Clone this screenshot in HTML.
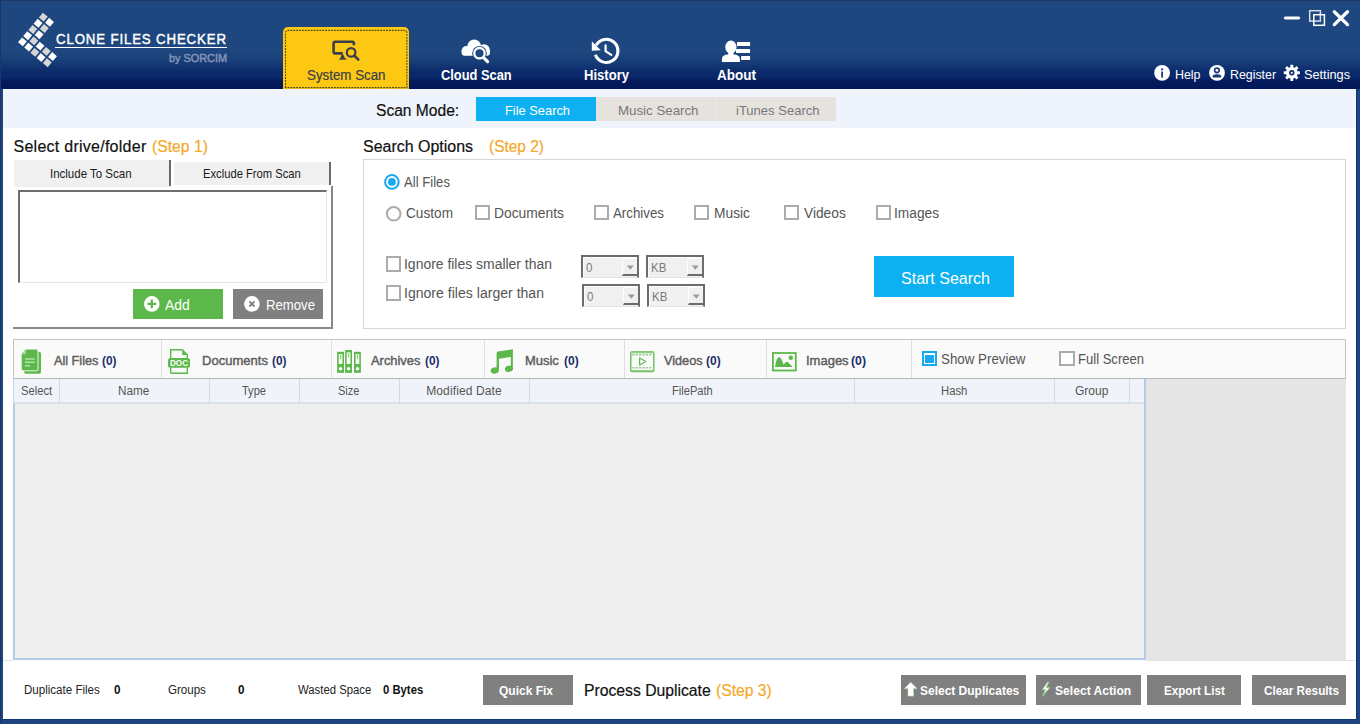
<!DOCTYPE html>
<html><head><meta charset="utf-8"><title>Clone Files Checker</title>
<style>
html,body{margin:0;padding:0;width:1360px;height:724px;overflow:hidden;background:#1d447e;}
body{position:relative;font-family:"Liberation Sans",sans-serif;}
.r{position:absolute;box-sizing:border-box;}
svg.r{overflow:visible;}
.t{position:absolute;line-height:1;white-space:nowrap;font-family:"Liberation Sans",sans-serif;}
</style></head><body>
<div class="r" style="left:0px;top:0px;width:1360px;height:724px;background:#1d447e;"></div>
<div class="r" style="left:0px;top:0px;width:1360px;height:89px;background:linear-gradient(to bottom,#1f477f 0px,#1f477f 52px,#173d77 62px,#0b2a6b 72px,#0a286a 77px,#04195a 82px,#03185a 89px);"></div>
<div class="r" style="left:0px;top:0px;width:1360px;height:1px;background:#1b3764;"></div>
<div class="r" style="left:0px;top:0px;width:1px;height:724px;background:#1b3764;"></div>
<div class="r" style="left:3px;top:89px;width:1353px;height:630px;background:#ffffff;"></div>
<div class="r" style="left:3px;top:89px;width:1353px;height:39px;background:#eff3fc;"></div>
<div class="r" style="left:3px;top:719px;width:1353px;height:1px;background:#0e387a;"></div>
<div class="r" style="left:1356px;top:89px;width:1px;height:630px;background:#0e387a;"></div>
<svg class="r" style="left:0;top:0" width="80" height="80"><g transform="translate(22.46,41.9) rotate(-50)"><rect x="-3.15" y="-3.15" width="6.3" height="6.3" fill="#ffffff"/><rect x="4.95" y="-3.15" width="6.3" height="6.3" fill="#ffffff"/><rect x="13.05" y="-3.15" width="6.3" height="6.3" fill="#d6d6d6"/><rect x="21.15" y="-3.15" width="6.3" height="6.3" fill="#ffffff"/><rect x="29.25" y="-3.15" width="6.3" height="6.3" fill="#d6d6d6"/><rect x="4.95" y="4.95" width="6.3" height="6.3" fill="#d6d6d6"/><rect x="13.05" y="4.95" width="6.3" height="6.3" fill="#ffffff"/><rect x="21.15" y="4.95" width="6.3" height="6.3" fill="#d6d6d6"/><rect x="29.25" y="4.95" width="6.3" height="6.3" fill="#ffffff"/><rect x="-3.15" y="4.95" width="6.3" height="6.3" fill="#ffffff"/><rect x="-3.15" y="13.05" width="6.3" height="6.3" fill="#d6d6d6"/><rect x="-3.15" y="21.15" width="6.3" height="6.3" fill="#ffffff"/><rect x="-3.15" y="29.25" width="6.3" height="6.3" fill="#d6d6d6"/><rect x="4.95" y="13.05" width="6.3" height="6.3" fill="#ffffff"/><rect x="4.95" y="21.15" width="6.3" height="6.3" fill="#d6d6d6"/><rect x="4.95" y="29.25" width="6.3" height="6.3" fill="#ffffff"/></g></svg>
<div class="t" style="left:56px;top:31px;font-size:15.5px;color:#fff;letter-spacing:1.0px;transform:scaleX(0.8548);transform-origin:0 0;-webkit-text-stroke:0.45px #fff;">CLONE FILES CHECKER</div>
<div class="r" style="left:55px;top:46.5px;width:172px;height:1.4px;background:#fff;"></div>
<div class="t" style="left:168.50px;top:53px;font-size:11.5px;color:#8797bb;-webkit-text-stroke:0.45px #8797bb;transform:scaleX(0.9455);transform-origin:0 0;">by SORCIM</div>
<div class="r" style="left:283px;top:27px;width:126px;height:62px;background:#fcc814;border-radius:5px 5px 0 0;"></div>
<svg class="r" style="left:283px;top:27px" width="126" height="62"><path d="M2.5 60.6 V6.3 Q2.5 3.4 5.4 3.4 H121 Q123.9 3.4 123.9 6.3 V60.6 Z" fill="none" stroke="#4f4420" stroke-width="1.1" stroke-dasharray="1.8 1.1"/></svg>
<svg class="r" style="left:325px;top:35px" width="40" height="30" viewBox="0 0 40 30">
<path d="M17.8 18.4 H10.2 Q8.6 18.4 8.6 16.8 V8.4 Q8.6 6.8 10.2 6.8 H27.3 Q28.9 6.8 28.9 8.4 V10.2" fill="none" stroke="#3b3d48" stroke-width="2.6"/>
<path d="M16.6 19.4 L18.3 19.4 Q19 23 22.2 24.6 L14 24.8 Q16.2 22.6 16.6 19.4 Z" fill="#3b3d48"/>
<circle cx="26.1" cy="17.4" r="4.3" fill="none" stroke="#3b3d48" stroke-width="2.2"/>
<path d="M29.2 20.5 L33.3 24.6" stroke="#3b3d48" stroke-width="2.6" stroke-linecap="round"/>
</svg>
<div class="t" style="left:306.75px;top:68px;font-size:14px;color:#3b3d48;-webkit-text-stroke:0.2px #3b3d48;transform:scaleX(0.9518);transform-origin:0 0;">System Scan</div>
<svg class="r" style="left:455px;top:35px" width="45" height="30" viewBox="0 0 45 30">
<circle cx="11.3" cy="15.8" r="4.7" fill="#fff"/>
<circle cx="19.2" cy="11.2" r="6.8" fill="#fff"/>
<circle cx="29" cy="15.2" r="5.9" fill="#fff"/>
<rect x="6.6" y="14" width="28.3" height="6.7" rx="3" fill="#fff"/>
<circle cx="24.5" cy="18.2" r="7.3" fill="#1f477f"/>
<path d="M28.5 22.5 L32.6 26.6" stroke="#1f477f" stroke-width="5.5" stroke-linecap="round"/>
<circle cx="24.5" cy="18.2" r="5.2" fill="none" stroke="#fff" stroke-width="2.3"/>
<path d="M28.6 22.6 L32.6 26.6" stroke="#fff" stroke-width="3" stroke-linecap="round"/>
</svg>
<div class="t" style="left:440.65px;top:68px;font-size:14px;color:#fff;font-weight:bold;transform:scaleX(0.9181);transform-origin:0 0;">Cloud Scan</div>
<svg class="r" style="left:585px;top:33px" width="45" height="32" viewBox="0 0 45 32">
<path d="M10.4 21.8 A11.6 11.6 0 1 0 11.2 12.2" fill="none" stroke="#fff" stroke-width="3.1"/>
<path d="M6.8 8.3 L6.8 17.7 L15.8 17.3 Z" fill="#fff"/>
<path d="M20.6 12.3 V18.2 L26.3 21.9" fill="none" stroke="#fff" stroke-width="2.2" stroke-linecap="round" stroke-linejoin="miter"/>
</svg>
<div class="t" style="left:583.50px;top:68px;font-size:14px;color:#fff;font-weight:bold;transform:scaleX(0.9329);transform-origin:0 0;">History</div>
<svg class="r" style="left:715px;top:33px" width="45" height="32" viewBox="0 0 45 32">
<ellipse cx="15.9" cy="14.2" rx="5.6" ry="6.6" fill="#fff"/>
<path d="M13.5 19 H18.3 L18.6 21.5 Q24.5 21.8 24.9 25.5 V29.1 H6.9 V25.5 Q7.3 21.8 13.2 21.5 Z" fill="#fff"/>
<rect x="22" y="9.1" width="13.1" height="3.9" fill="#fff" rx="0.6"/>
<rect x="21" y="16.1" width="14.1" height="3.8" fill="#fff" rx="0.6"/>
<rect x="26.1" y="23" width="9" height="4" fill="#fff" rx="0.6"/>
</svg>
<div class="t" style="left:716.50px;top:68px;font-size:14px;color:#fff;font-weight:bold;transform:scaleX(0.9647);transform-origin:0 0;">About</div>
<svg class="r" style="left:1280px;top:0px" width="80" height="32" viewBox="0 0 80 32">
<path d="M5.4 18 H18.6" stroke="#fff" stroke-width="3.2" stroke-linecap="round"/>
<rect x="29.7" y="10.7" width="10.7" height="10.4" fill="none" stroke="#d5dbe6" stroke-width="1.5"/>
<rect x="33.8" y="14.7" width="10.6" height="10.6" fill="none" stroke="#fff" stroke-width="1.5"/>
<path d="M54.3 11.8 L67.5 24.6 M67.5 11.8 L54.3 24.6" stroke="#fff" stroke-width="3.3" stroke-linecap="round"/>
</svg>
<svg class="r" style="left:1150px;top:62px" width="160" height="24" viewBox="0 0 160 24">
<circle cx="12.1" cy="10.9" r="7.9" fill="#fff"/>
<circle cx="12.1" cy="7.4" r="1.1" fill="#1b3d78"/>
<rect x="11.2" y="9.6" width="1.8" height="6" fill="#1b3d78"/>
<circle cx="67" cy="10.9" r="7.9" fill="#fff"/>
<circle cx="66.9" cy="8.3" r="3.1" fill="#17387a"/>
<circle cx="66.9" cy="8.3" r="1.4" fill="#fff"/>
<path d="M62.5 14.6 Q62.7 12.3 66.9 12.3 Q71.1 12.3 71.3 14.6 Q71.3 15.5 70.2 15.5 H63.6 Q62.5 15.5 62.5 14.6 Z" fill="#17387a"/>
<g transform="translate(141.8,10.8)" fill="#fff"><circle r="5.9"/><rect x="-1.45" y="-8.1" width="2.9" height="16.2" rx="0.4" transform="rotate(0)"/><rect x="-1.45" y="-8.1" width="2.9" height="16.2" rx="0.4" transform="rotate(45)"/><rect x="-1.45" y="-8.1" width="2.9" height="16.2" rx="0.4" transform="rotate(90)"/><rect x="-1.45" y="-8.1" width="2.9" height="16.2" rx="0.4" transform="rotate(135)"/><circle r="2.7" fill="#0d2c6c"/><circle r="1.1" fill="#fff"/></g>
</svg>
<div class="t" style="left:1175.00px;top:68px;font-size:13px;color:#fff;transform:scaleX(0.9538);transform-origin:0 0;">Help</div>
<div class="t" style="left:1229.50px;top:68px;font-size:13px;color:#fff;transform:scaleX(0.9503);transform-origin:0 0;">Register</div>
<div class="t" style="left:1304.00px;top:68px;font-size:13px;color:#fff;transform:scaleX(0.9793);transform-origin:0 0;">Settings</div>
<div class="t" style="left:376.40px;top:103px;font-size:16px;color:#111;-webkit-text-stroke:0.2px #111;transform:scaleX(0.9744);transform-origin:0 0;">Scan Mode:</div>
<div class="r" style="left:476px;top:97px;width:120px;height:24px;background:#0eb0f2;"></div>
<div class="t" style="left:505.30px;top:104px;font-size:13.5px;color:#fff;transform:scaleX(0.9520);transform-origin:0 0;">File Search</div>
<div class="r" style="left:596px;top:97px;width:119px;height:24px;background:#e6e3df;"></div>
<div class="r" style="left:715px;top:97px;width:121px;height:24px;background:#e6e3df;"></div>
<div class="r" style="left:714.5px;top:97px;width:1px;height:24px;background:#ecebe8;"></div>
<div class="t" style="left:617.65px;top:104px;font-size:13.5px;color:#777;transform:scaleX(0.9844);transform-origin:0 0;">Music Search</div>
<div class="t" style="left:735.70px;top:104px;font-size:13.5px;color:#777;transform:scaleX(0.9650);transform-origin:0 0;">iTunes Search</div>
<div class="t" style="left:13.50px;top:139px;font-size:16px;color:#111;-webkit-text-stroke:0.2px #111;letter-spacing:0.260px;">Select drive/folder</div>
<div class="t" style="left:152.20px;top:139px;font-size:16px;color:#f6a82a;-webkit-text-stroke:0.2px #f6a82a;transform:scaleX(0.9839);transform-origin:0 0;">(Step 1)</div>
<div class="r" style="left:14px;top:160px;width:157px;height:26.5px;background:#f0f0f0;border-radius:2px 0 0 0;"></div>
<div class="r" style="left:169.2px;top:160px;width:2px;height:26px;background:#6a6a6a;"></div>
<div class="t" style="left:50.30px;top:167px;font-size:13px;color:#1a1a1a;transform:scaleX(0.8835);transform-origin:0 0;">Include To Scan</div>
<div class="r" style="left:174px;top:162px;width:157px;height:22.5px;background:#f0f0f0;border-radius:2px 0 0 0;"></div>
<div class="r" style="left:329.2px;top:162px;width:2px;height:22.5px;background:#6a6a6a;"></div>
<div class="t" style="left:203.40px;top:167px;font-size:13px;color:#1a1a1a;transform:scaleX(0.8622);transform-origin:0 0;">Exclude From Scan</div>
<div class="r" style="left:331px;top:185.5px;width:2px;height:143.3px;background:#888;"></div>
<div class="r" style="left:13px;top:327px;width:320px;height:2px;background:#888;"></div>
<div class="r" style="left:18.3px;top:190.2px;width:309px;height:93px;background:#fff;border-top:2px solid #6e6e6e;border-left:2px solid #6e6e6e;border-right:1px solid #e3e3e3;border-bottom:1px solid #e3e3e3;box-sizing:border-box;"></div>
<div class="r" style="left:133px;top:289px;width:90px;height:29.6px;background:#5cb84a;"></div>
<svg class="r" style="left:143px;top:295px" width="18" height="18" viewBox="0 0 18 18"><circle cx="8.8" cy="8.9" r="7.8" fill="#fff"/><path d="M8.8 4.5 V13.3 M4.4 8.9 H13.2" stroke="#5cb84a" stroke-width="2.2"/></svg>
<div class="t" style="left:165.40px;top:298px;font-size:14.5px;color:#fff;transform:scaleX(0.9574);transform-origin:0 0;">Add</div>
<div class="r" style="left:233px;top:289px;width:90px;height:29.6px;background:#808080;"></div>
<svg class="r" style="left:243px;top:295px" width="18" height="18" viewBox="0 0 18 18"><circle cx="8.9" cy="8.9" r="7.8" fill="#fff"/><path d="M6.3 6.3 L11.5 11.5 M11.5 6.3 L6.3 11.5" stroke="#808080" stroke-width="1.8"/></svg>
<div class="t" style="left:265.60px;top:298px;font-size:14.5px;color:#fff;transform:scaleX(0.9075);transform-origin:0 0;">Remove</div>
<div class="t" style="left:363.30px;top:139px;font-size:16px;color:#111;-webkit-text-stroke:0.2px #111;transform:scaleX(0.9974);transform-origin:0 0;">Search Options</div>
<div class="t" style="left:488.90px;top:139px;font-size:16px;color:#f6a82a;-webkit-text-stroke:0.2px #f6a82a;transform:scaleX(0.9664);transform-origin:0 0;">(Step 2)</div>
<div class="r" style="left:363px;top:159px;width:983px;height:170px;border:1px solid #d6d6d6;box-sizing:border-box;"></div>
<svg class="r" style="left:380px;top:170px" width="30" height="60" viewBox="0 0 30 60">
<circle cx="11.9" cy="11.9" r="6.8" fill="#fff" stroke="#1aa9ef" stroke-width="2"/>
<circle cx="11.9" cy="11.9" r="3.9" fill="#1aa9ef"/>
<circle cx="13.7" cy="43.8" r="6.8" fill="#fff" stroke="#ababab" stroke-width="2"/>
</svg>
<div class="t" style="left:404.00px;top:175px;font-size:14px;color:#555;transform:scaleX(0.9386);transform-origin:0 0;">All Files</div>
<div class="t" style="left:405.60px;top:206px;font-size:14px;color:#555;transform:scaleX(0.9744);transform-origin:0 0;">Custom</div>
<div class="r" style="left:474.5px;top:205.2px;width:15.2px;height:15.2px;border:2px solid #ababab;box-sizing:border-box;background:#fff;"></div>
<div class="t" style="left:493.60px;top:206px;font-size:14px;color:#555;transform:scaleX(0.9886);transform-origin:0 0;">Documents</div>
<div class="r" style="left:593.5px;top:205.2px;width:15.2px;height:15.2px;border:2px solid #ababab;box-sizing:border-box;background:#fff;"></div>
<div class="t" style="left:613.00px;top:206px;font-size:14px;color:#555;transform:scaleX(0.9500);transform-origin:0 0;">Archives</div>
<div class="r" style="left:694.3px;top:205.2px;width:15.2px;height:15.2px;border:2px solid #ababab;box-sizing:border-box;background:#fff;"></div>
<div class="t" style="left:713.60px;top:206px;font-size:14px;color:#555;transform:scaleX(0.9847);transform-origin:0 0;">Music</div>
<div class="r" style="left:784.3px;top:205.2px;width:15.2px;height:15.2px;border:2px solid #ababab;box-sizing:border-box;background:#fff;"></div>
<div class="t" style="left:803.50px;top:206px;font-size:14px;color:#555;transform:scaleX(0.9812);transform-origin:0 0;">Videos</div>
<div class="r" style="left:875.5px;top:205.2px;width:15.2px;height:15.2px;border:2px solid #ababab;box-sizing:border-box;background:#fff;"></div>
<div class="t" style="left:893.80px;top:206px;font-size:14px;color:#555;transform:scaleX(0.9802);transform-origin:0 0;">Images</div>
<div class="r" style="left:385.6px;top:256.4px;width:15.2px;height:15.2px;border:2px solid #ababab;box-sizing:border-box;"></div>
<div class="t" style="left:404.00px;top:257px;font-size:14px;color:#555;transform:scaleX(0.9958);transform-origin:0 0;">Ignore files smaller than</div>
<div class="r" style="left:385.6px;top:285.4px;width:15.2px;height:15.2px;border:2px solid #ababab;box-sizing:border-box;"></div>
<div class="t" style="left:404.00px;top:286px;font-size:14px;color:#555;letter-spacing:0.029px;">Ignore files larger than</div>
<div class="r" style="left:581.2px;top:255.1px;width:58px;height:22.5px;background:#f0f0f0;border-top:2px solid #6c6c6c;border-left:2px solid #6c6c6c;border-right:2px solid #6c6c6c;border-bottom:1px solid #e4e4e4;box-sizing:border-box;"></div>
<div class="r" style="left:583.2px;top:257.1px;width:54px;height:1px;background:#fdfdfd;"></div>
<div class="r" style="left:583.2px;top:257.1px;width:1px;height:19.5px;background:#fdfdfd;"></div>
<div class="r" style="left:622.2px;top:257.6px;width:15px;height:18.2px;background:#f0f0f0;border-left:1px solid #fdfdfd;border-top:1px solid #fdfdfd;border-bottom:2px solid #6c6c6c;box-sizing:border-box;"></div>
<svg class="r" style="left:626.2px;top:264.6px" width="9" height="6"><path d="M0.8 0.5 H7.8 L4.3 4.8 Z" fill="#9a9a9a"/></svg>
<div class="t" style="left:585.70px;top:262px;font-size:12.5px;color:#7a7a7a;transform:scaleX(0.9200);transform-origin:0 0;">0</div>
<div class="r" style="left:646.2px;top:255.1px;width:58px;height:22.5px;background:#f0f0f0;border-top:2px solid #6c6c6c;border-left:2px solid #6c6c6c;border-right:2px solid #6c6c6c;border-bottom:1px solid #e4e4e4;box-sizing:border-box;"></div>
<div class="r" style="left:648.2px;top:257.1px;width:54px;height:1px;background:#fdfdfd;"></div>
<div class="r" style="left:648.2px;top:257.1px;width:1px;height:19.5px;background:#fdfdfd;"></div>
<div class="r" style="left:687.2px;top:257.6px;width:15px;height:18.2px;background:#f0f0f0;border-left:1px solid #fdfdfd;border-top:1px solid #fdfdfd;border-bottom:2px solid #6c6c6c;box-sizing:border-box;"></div>
<svg class="r" style="left:691.2px;top:264.6px" width="9" height="6"><path d="M0.8 0.5 H7.8 L4.3 4.8 Z" fill="#9a9a9a"/></svg>
<div class="t" style="left:650.70px;top:262px;font-size:12.5px;color:#7a7a7a;transform:scaleX(0.9200);transform-origin:0 0;">KB</div>
<div class="r" style="left:582px;top:284.4px;width:58px;height:22.5px;background:#f0f0f0;border-top:2px solid #6c6c6c;border-left:2px solid #6c6c6c;border-right:2px solid #6c6c6c;border-bottom:1px solid #e4e4e4;box-sizing:border-box;"></div>
<div class="r" style="left:584px;top:286.4px;width:54px;height:1px;background:#fdfdfd;"></div>
<div class="r" style="left:584px;top:286.4px;width:1px;height:19.5px;background:#fdfdfd;"></div>
<div class="r" style="left:623px;top:286.9px;width:15px;height:18.2px;background:#f0f0f0;border-left:1px solid #fdfdfd;border-top:1px solid #fdfdfd;border-bottom:2px solid #6c6c6c;box-sizing:border-box;"></div>
<svg class="r" style="left:627px;top:293.9px" width="9" height="6"><path d="M0.8 0.5 H7.8 L4.3 4.8 Z" fill="#9a9a9a"/></svg>
<div class="t" style="left:586.50px;top:291px;font-size:12.5px;color:#7a7a7a;transform:scaleX(0.9200);transform-origin:0 0;">0</div>
<div class="r" style="left:647px;top:284.4px;width:58px;height:22.5px;background:#f0f0f0;border-top:2px solid #6c6c6c;border-left:2px solid #6c6c6c;border-right:2px solid #6c6c6c;border-bottom:1px solid #e4e4e4;box-sizing:border-box;"></div>
<div class="r" style="left:649px;top:286.4px;width:54px;height:1px;background:#fdfdfd;"></div>
<div class="r" style="left:649px;top:286.4px;width:1px;height:19.5px;background:#fdfdfd;"></div>
<div class="r" style="left:688px;top:286.9px;width:15px;height:18.2px;background:#f0f0f0;border-left:1px solid #fdfdfd;border-top:1px solid #fdfdfd;border-bottom:2px solid #6c6c6c;box-sizing:border-box;"></div>
<svg class="r" style="left:692px;top:293.9px" width="9" height="6"><path d="M0.8 0.5 H7.8 L4.3 4.8 Z" fill="#9a9a9a"/></svg>
<div class="t" style="left:651.50px;top:291px;font-size:12.5px;color:#7a7a7a;transform:scaleX(0.9200);transform-origin:0 0;">KB</div>
<div class="r" style="left:874px;top:256.3px;width:140px;height:40.3px;background:#0db1f2;"></div>
<div class="t" style="left:900.50px;top:270px;font-size:17px;color:#fff;transform:scaleX(0.9419);transform-origin:0 0;">Start Search</div>
<div class="r" style="left:13px;top:339px;width:1333px;height:40px;background:#fafafa;border:1px solid #c4c4c4;border-top:1.5px solid #c4c4c4;box-sizing:border-box;"></div>
<div class="r" style="left:13px;top:378px;width:1333px;height:1px;background:#b5b9bd;"></div>
<div class="r" style="left:161px;top:340px;width:1px;height:38px;background:#dedede;"></div>
<div class="r" style="left:331px;top:340px;width:1px;height:38px;background:#dedede;"></div>
<div class="r" style="left:484px;top:340px;width:1px;height:38px;background:#dedede;"></div>
<div class="r" style="left:624px;top:340px;width:1px;height:38px;background:#dedede;"></div>
<div class="r" style="left:766px;top:340px;width:1px;height:38px;background:#dedede;"></div>
<div class="r" style="left:911px;top:340px;width:1px;height:38px;background:#dedede;"></div>
<svg class="r" style="left:15px;top:345px" width="30" height="32" viewBox="0 0 30 32">
<path d="M9.1 6.8 H24.1 Q26 6.8 26 8.7 V26.8 Q26 28.7 24.1 28.7 H11 Q9.1 28.7 9.1 26.8 Z" fill="#5cb84a"/>
<path d="M6.2 8.9 L10.9 4.1 H21.2 Q23 4.1 23 5.9 V24 Q23 25.8 21.2 25.8 H8 Q6.2 25.8 6.2 24 Z" fill="#5cb84a" stroke="#fafafa" stroke-width="0.9"/>
<path d="M6.2 9.2 H10.8 V4.1 Z" fill="#a9d89f"/>
<path d="M10 14.1 H19.8 M10 17.3 H19.8 M10 20.7 H15.1" stroke="#b5e0ad" stroke-width="1.5"/>
</svg>
<div class="t" style="left:53.50px;top:354px;font-size:13.5px;color:#5e5e5e;-webkit-text-stroke:0.45px #5e5e5e;transform:scaleX(0.9396);transform-origin:0 0;">All Files</div>
<div class="t" style="left:101.50px;top:354px;font-size:13px;color:#1e2f6b;font-weight:bold;transform:scaleX(0.9126);transform-origin:0 0;">(0)</div>
<svg class="r" style="left:163px;top:345px" width="30" height="32" viewBox="0 0 30 32">
<path d="M7.7 28.2 V22.8 M24.3 22.8 V28.2 H7.7 M7.7 13 V4.7 H19.2 L24.3 9.8 V13" fill="none" stroke="#5cb84a" stroke-width="1.4"/>
<path d="M19.2 4.7 V10 H24.3 Z" fill="#5cb84a"/>
<rect x="5" y="13" width="22" height="9.8" rx="2.6" fill="#5cb84a"/>
<text x="16" y="21.2" font-family="Liberation Sans" font-weight="bold" font-size="8.4" fill="#fff" text-anchor="middle" textLength="18" lengthAdjust="spacingAndGlyphs">DOC</text>
</svg>
<div class="t" style="left:201.90px;top:354px;font-size:13.5px;color:#5e5e5e;-webkit-text-stroke:0.45px #5e5e5e;transform:scaleX(0.9666);transform-origin:0 0;">Documents</div>
<div class="t" style="left:271.80px;top:354px;font-size:13px;color:#1e2f6b;font-weight:bold;transform:scaleX(0.9126);transform-origin:0 0;">(0)</div>
<svg class="r" style="left:333px;top:345px" width="32" height="32" viewBox="0 0 32 32"><rect x="4.10" y="6.80" width="6.9" height="21.00" fill="#5cb84a"/><rect x="5.70" y="9.20" width="3.7" height="9.70" fill="#fff"/><rect x="6.90" y="10.00" width="1.3" height="4.2" fill="#8fcf84"/><circle cx="7.55" cy="368.8" r="1.8" fill="#fff" transform="translate(0,-345)"/><rect x="12.10" y="5.00" width="6.9" height="22.80" fill="#5cb84a"/><rect x="13.70" y="7.40" width="3.7" height="11.50" fill="#fff"/><rect x="14.90" y="8.20" width="1.3" height="4.2" fill="#8fcf84"/><circle cx="15.55" cy="368.8" r="1.8" fill="#fff" transform="translate(0,-345)"/><rect x="21.00" y="6.80" width="6.9" height="21.00" fill="#5cb84a"/><rect x="22.60" y="9.20" width="3.7" height="9.70" fill="#fff"/><rect x="23.80" y="10.00" width="1.3" height="4.2" fill="#8fcf84"/><circle cx="24.45" cy="368.8" r="1.8" fill="#fff" transform="translate(0,-345)"/></svg>
<div class="t" style="left:371.30px;top:354px;font-size:13.5px;color:#5e5e5e;-webkit-text-stroke:0.45px #5e5e5e;transform:scaleX(0.9543);transform-origin:0 0;">Archives</div>
<div class="t" style="left:424.70px;top:354px;font-size:13px;color:#1e2f6b;font-weight:bold;transform:scaleX(0.9126);transform-origin:0 0;">(0)</div>
<svg class="r" style="left:486px;top:345px" width="32" height="32" viewBox="0 0 32 32">
<path d="M10.6 25.5 V8.2 Q10.6 6.8 12 6.6 L26.9 4.3 V22.5 H24.8 V11.9 L13 13.8 V25.5 Z" fill="#5cb84a"/>
<ellipse cx="8.7" cy="25.5" rx="4.1" ry="3" fill="#5cb84a" transform="rotate(-12 8.7 25.5)"/>
<ellipse cx="23" cy="23.8" rx="4.1" ry="3" fill="#5cb84a" transform="rotate(-12 23 23.8)"/>
</svg>
<div class="t" style="left:524.70px;top:354px;font-size:13.5px;color:#5e5e5e;-webkit-text-stroke:0.45px #5e5e5e;transform:scaleX(0.9588);transform-origin:0 0;">Music</div>
<div class="t" style="left:564.40px;top:354px;font-size:13px;color:#1e2f6b;font-weight:bold;transform:scaleX(0.9252);transform-origin:0 0;">(0)</div>
<svg class="r" style="left:626px;top:345px" width="32" height="32" viewBox="0 0 32 32">
<rect x="4.8" y="6.9" width="23" height="19.6" rx="1" fill="none" stroke="#5cb84a" stroke-width="1.3"/>
<path d="M4.8 7.6 H27.8" stroke="#8fcf84" stroke-width="1.4"/>
<path d="M4.8 25.8 H27.8" stroke="#8fcf84" stroke-width="1.4"/>
<path d="M6.2 9.8 H26.6 M6.2 22.8 H26.6" stroke="#8fcf84" stroke-width="1.5" stroke-dasharray="2.2 1.2"/>
<path d="M13.6 12.9 V19.9 L19.9 16.4 Z" fill="none" stroke="#5cb84a" stroke-width="1.2" stroke-linejoin="round"/>
</svg>
<div class="t" style="left:664.40px;top:354px;font-size:13.5px;color:#5e5e5e;-webkit-text-stroke:0.45px #5e5e5e;transform:scaleX(0.9400);transform-origin:0 0;">Videos</div>
<div class="t" style="left:706.20px;top:354px;font-size:13px;color:#1e2f6b;font-weight:bold;transform:scaleX(0.9252);transform-origin:0 0;">(0)</div>
<svg class="r" style="left:768px;top:345px" width="32" height="32" viewBox="0 0 32 32">
<rect x="4.9" y="8" width="22.9" height="17.5" fill="none" stroke="#5cb84a" stroke-width="1.8"/>
<path d="M7 22 Q8.5 12 10.9 12 Q13 12 15.6 19.4 Q17 17.8 19.2 16.6 L24.8 22 Z" fill="#5cb84a"/>
<circle cx="22.8" cy="12.8" r="2.2" fill="#5cb84a"/>
</svg>
<div class="t" style="left:805.60px;top:354px;font-size:13.5px;color:#5e5e5e;-webkit-text-stroke:0.45px #5e5e5e;transform:scaleX(0.9623);transform-origin:0 0;">Images</div>
<div class="t" style="left:851.20px;top:354px;font-size:13px;color:#1e2f6b;font-weight:bold;transform:scaleX(0.9441);transform-origin:0 0;">(0)</div>
<div class="r" style="left:922px;top:351.2px;width:15.3px;height:15.3px;border:2px solid #1aa9ef;box-sizing:border-box;background:#fff;"></div>
<div class="r" style="left:925.4px;top:354.6px;width:8.5px;height:8.5px;background:#1aa9ef;"></div>
<div class="t" style="left:941.30px;top:352px;font-size:14px;color:#555;transform:scaleX(0.9526);transform-origin:0 0;">Show Preview</div>
<div class="r" style="left:1059px;top:351.2px;width:15.5px;height:15.3px;border:2px solid #ababab;box-sizing:border-box;background:#fff;"></div>
<div class="t" style="left:1078.20px;top:352px;font-size:14px;color:#555;transform:scaleX(0.9321);transform-origin:0 0;">Full Screen</div>
<div class="r" style="left:13px;top:379px;width:1133px;height:281px;background:#efefef;"></div>
<div class="r" style="left:13px;top:379px;width:1133px;height:23px;background:#f0f3f9;"></div>
<div class="r" style="left:13px;top:402px;width:1132px;height:1.7px;background:#dde1e8;"></div>
<div class="r" style="left:59px;top:379px;width:1px;height:24.5px;background:#d3d7de;"></div>
<div class="r" style="left:209px;top:379px;width:1px;height:24.5px;background:#d3d7de;"></div>
<div class="r" style="left:299px;top:379px;width:1px;height:24.5px;background:#d3d7de;"></div>
<div class="r" style="left:399px;top:379px;width:1px;height:24.5px;background:#d3d7de;"></div>
<div class="r" style="left:529px;top:379px;width:1px;height:24.5px;background:#d3d7de;"></div>
<div class="r" style="left:854px;top:379px;width:1px;height:24.5px;background:#d3d7de;"></div>
<div class="r" style="left:1054px;top:379px;width:1px;height:24.5px;background:#d3d7de;"></div>
<div class="r" style="left:1129px;top:379px;width:1px;height:24.5px;background:#d3d7de;"></div>
<div class="r" style="left:13px;top:379px;width:1px;height:24px;background:#c5d6ee;"></div>
<div class="r" style="left:13px;top:403px;width:1.7px;height:257px;background:#b5cbea;"></div>
<div class="r" style="left:1144px;top:379px;width:1.7px;height:281px;background:#b5cbea;"></div>
<div class="r" style="left:13px;top:658px;width:1132.7px;height:2.2px;background:#b5cbea;"></div>
<div class="r" style="left:1145.7px;top:379px;width:200.3px;height:281px;background:#e6e6e6;"></div>
<div class="t" style="left:20.90px;top:385px;font-size:12px;color:#555;transform:scaleX(0.9355);transform-origin:0 0;">Select</div>
<div class="t" style="left:118.30px;top:385px;font-size:12px;color:#555;transform:scaleX(0.9747);transform-origin:0 0;">Name</div>
<div class="t" style="left:241.95px;top:385px;font-size:12px;color:#555;transform:scaleX(0.9184);transform-origin:0 0;">Type</div>
<div class="t" style="left:338.15px;top:385px;font-size:12px;color:#555;transform:scaleX(0.9210);transform-origin:0 0;">Size</div>
<div class="t" style="left:426.20px;top:385px;font-size:12px;color:#555;letter-spacing:0.120px;">Modified Date</div>
<div class="t" style="left:671.55px;top:385px;font-size:12px;color:#555;transform:scaleX(0.9245);transform-origin:0 0;">FilePath</div>
<div class="t" style="left:940.60px;top:385px;font-size:12px;color:#555;transform:scaleX(0.9424);transform-origin:0 0;">Hash</div>
<div class="t" style="left:1074.85px;top:385px;font-size:12px;color:#555;transform:scaleX(0.9985);transform-origin:0 0;">Group</div>
<div class="r" style="left:3px;top:659.5px;width:10px;height:1px;background:#e0e0e0;"></div>
<div class="r" style="left:1145px;top:659.6px;width:211px;height:1px;background:#e3e3e3;"></div>
<div class="t" style="left:23.50px;top:684px;font-size:12.5px;color:#222;transform:scaleX(0.9247);transform-origin:0 0;">Duplicate Files</div>
<div class="t" style="left:113.50px;top:684px;font-size:12.5px;color:#111;font-weight:bold;transform:scaleX(0.9350);transform-origin:0 0;">0</div>
<div class="t" style="left:168.20px;top:684px;font-size:12.5px;color:#222;transform:scaleX(0.9246);transform-origin:0 0;">Groups</div>
<div class="t" style="left:238.20px;top:684px;font-size:12.5px;color:#111;font-weight:bold;transform:scaleX(0.9350);transform-origin:0 0;">0</div>
<div class="t" style="left:298.30px;top:684px;font-size:12.5px;color:#222;transform:scaleX(0.9066);transform-origin:0 0;">Wasted Space</div>
<div class="t" style="left:383.20px;top:684px;font-size:12.5px;color:#111;font-weight:bold;transform:scaleX(0.9040);transform-origin:0 0;">0 Bytes</div>
<div class="r" style="left:483px;top:675.2px;width:90px;height:29.5px;background:#808080;"></div>
<div class="t" style="left:499.10px;top:684px;font-size:13px;color:#fff;font-weight:bold;transform:scaleX(0.9228);transform-origin:0 0;">Quick Fix</div>
<div class="t" style="left:583.60px;top:683px;font-size:16px;color:#111;-webkit-text-stroke:0.2px #111;transform:scaleX(0.9826);transform-origin:0 0;">Process Duplicate</div>
<div class="t" style="left:716.40px;top:683px;font-size:16px;color:#f6a82a;-webkit-text-stroke:0.2px #f6a82a;transform:scaleX(0.9804);transform-origin:0 0;">(Step 3)</div>
<div class="r" style="left:901px;top:675.4px;width:125px;height:29.4px;background:#808080;"></div>
<div class="r" style="left:1036px;top:675.4px;width:104.5px;height:29.4px;background:#808080;"></div>
<div class="r" style="left:1147px;top:675.4px;width:93.7px;height:29.4px;background:#808080;"></div>
<div class="r" style="left:1251.8px;top:675.4px;width:93.8px;height:29.4px;background:#808080;"></div>
<svg class="r" style="left:900px;top:678px" width="160" height="22" viewBox="0 0 160 22">
<path d="M10.7 4.3 L17 10.6 H13.5 V18.1 H8 V10.6 H4.5 Z" fill="#fff" stroke="#b8e0b0" stroke-width="0.6"/>
<path d="M147.6 4 L142.2 11.8 H145.5 L142.4 18.4 L149.8 9.6 H146.3 L148.9 4 Z" fill="#fff" stroke="#8fd080" stroke-width="0.9" stroke-linejoin="round"/>
</svg>
<div class="t" style="left:920.40px;top:684px;font-size:13px;color:#fff;font-weight:bold;transform:scaleX(0.9215);transform-origin:0 0;">Select Duplicates</div>
<div class="t" style="left:1055.20px;top:684px;font-size:13px;color:#fff;font-weight:bold;transform:scaleX(0.9313);transform-origin:0 0;">Select Action</div>
<div class="t" style="left:1163.70px;top:684px;font-size:13px;color:#fff;font-weight:bold;transform:scaleX(0.8955);transform-origin:0 0;">Export List</div>
<div class="t" style="left:1264.20px;top:684px;font-size:13px;color:#fff;font-weight:bold;transform:scaleX(0.9026);transform-origin:0 0;">Clear Results</div>
</body></html>
